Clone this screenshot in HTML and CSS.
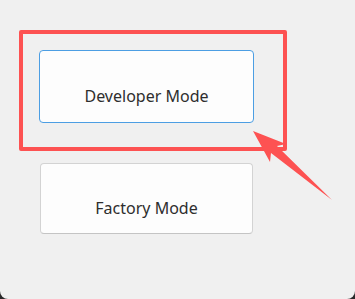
FILE: index.html
```html
<!DOCTYPE html>
<html lang="en">
<head>
  <meta charset="UTF-8">
  <meta name="viewport" content="width=device-width, initial-scale=1.0">
  <title>Mode Select</title>
  <link rel="stylesheet" href="styles.css">
</head>
<body>
  <div class="window">
    <div class="modes">
      <button class="mode-btn active">Developer Mode</button>
      <button class="mode-btn">Factory Mode</button>
    </div>

    <div class="mark-box"></div>
    <svg class="mark-arrow" width="355" height="299" viewBox="0 0 355 299">
      <polygon points="253,131 270,162 271,153 332,200 277,146 286,144" fill="#fd5252"/>
    </svg>
  </div>
</body>
</html>
```

FILE: styles.css
```css
body {
  margin: 0;
  background: #2a2a2a;
  font-family: "Noto Sans", "Open Sans", sans-serif;
}
.window {
  position: relative;
  width: 355px;
  height: 299px;
  background: #f0f0f0;
  border-radius: 0 0 8px 8px;
  overflow: hidden;
}
.modes {
  display: flex;
  flex-direction: column;
  gap: 40px;
  padding: 50px 0 0 39px;
  width: 215px;
}
.mode-btn {
  display: flex;
  align-items: flex-end;
  justify-content: center;
  box-sizing: border-box;
  width: 215px;
  height: 73px;
  padding: 0 0 15px;
  background: #fdfdfd;
  border: 1px solid #d3d3d3;
  border-bottom-color: #c4c4c4;
  border-radius: 4px;
  font-family: inherit;
  font-size: 16px;
  color: #2e2e2e;
  line-height: 22px;
}
.mode-btn + .mode-btn {
  width: 213px;
  height: 71px;
  margin-left: 1px;
  padding-bottom: 14px;
}
.mode-btn.active {
  border-color: #4c9ee3;
}
.mark-box {
  position: absolute;
  left: 19px;
  top: 30px;
  width: 260px;
  height: 113px;
  border: 4px solid #fd5252;
  border-radius: 2px;
}
.mark-arrow {
  position: absolute;
  left: 0;
  top: 0;
}
```
